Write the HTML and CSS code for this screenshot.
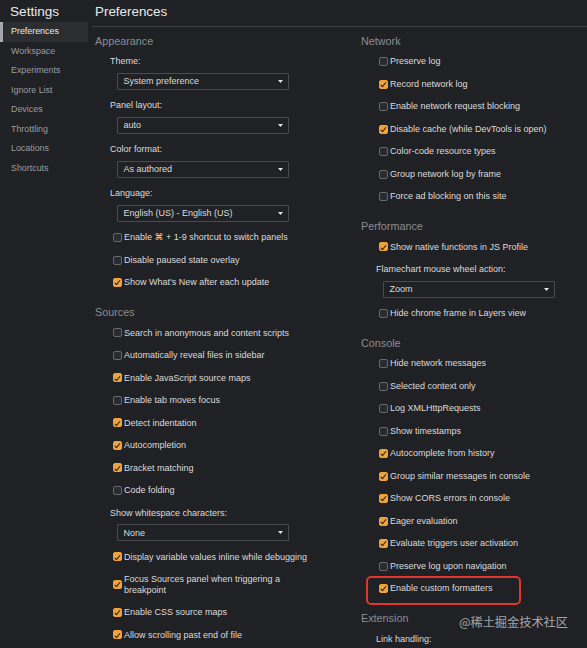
FILE: index.html
```html
<!DOCTYPE html>
<html lang="en">
<head>
<meta charset="utf-8">
<title>Settings</title>
<link rel="stylesheet" href="styles.css">
</head>
<body>
<div class="app">
  <aside class="sidebar">
    <div class="sb-title">Settings</div>
    <nav class="sb-nav">
      <div class="sb-item active">Preferences</div>
      <div class="sb-item">Workspace</div>
      <div class="sb-item">Experiments</div>
      <div class="sb-item">Ignore List</div>
      <div class="sb-item">Devices</div>
      <div class="sb-item">Throttling</div>
      <div class="sb-item">Locations</div>
      <div class="sb-item">Shortcuts</div>
    </nav>
  </aside>
  <main class="main">
    <header class="main-header"><h1 class="main-title">Preferences</h1></header>
    <div class="content">
      <div class="col col-left">
        <section class="sec">
          <h2 class="sec-title">Appearance</h2>
          <div class="label">Theme:</div>
          <div class="select"><span>System preference</span><svg class="arrow" width="5" height="3" viewBox="0 0 5 3"><path d="M0 0h5L2.5 3z"/></svg></div>
          <div class="label">Panel layout:</div>
          <div class="select"><span>auto</span><svg class="arrow" width="5" height="3" viewBox="0 0 5 3"><path d="M0 0h5L2.5 3z"/></svg></div>
          <div class="label">Color format:</div>
          <div class="select"><span>As authored</span><svg class="arrow" width="5" height="3" viewBox="0 0 5 3"><path d="M0 0h5L2.5 3z"/></svg></div>
          <div class="label">Language:</div>
          <div class="select"><span>English (US) - English (US)</span><svg class="arrow" width="5" height="3" viewBox="0 0 5 3"><path d="M0 0h5L2.5 3z"/></svg></div>
          <div class="row"><span class="cb"></span><span class="txt">Enable ⌘ + 1-9 shortcut to switch panels</span></div>
          <div class="row"><span class="cb"></span><span class="txt">Disable paused state overlay</span></div>
          <div class="row"><span class="cb on"></span><span class="txt">Show What's New after each update</span></div>
        </section>
        <section class="sec">
          <h2 class="sec-title">Sources</h2>
          <div class="row"><span class="cb"></span><span class="txt">Search in anonymous and content scripts</span></div>
          <div class="row"><span class="cb"></span><span class="txt">Automatically reveal files in sidebar</span></div>
          <div class="row"><span class="cb on"></span><span class="txt">Enable JavaScript source maps</span></div>
          <div class="row"><span class="cb"></span><span class="txt">Enable tab moves focus</span></div>
          <div class="row"><span class="cb on"></span><span class="txt">Detect indentation</span></div>
          <div class="row"><span class="cb on"></span><span class="txt">Autocompletion</span></div>
          <div class="row"><span class="cb on"></span><span class="txt">Bracket matching</span></div>
          <div class="row"><span class="cb"></span><span class="txt">Code folding</span></div>
          <div class="label">Show whitespace characters:</div>
          <div class="select"><span>None</span><svg class="arrow" width="5" height="3" viewBox="0 0 5 3"><path d="M0 0h5L2.5 3z"/></svg></div>
          <div class="row"><span class="cb on"></span><span class="txt">Display variable values inline while debugging</span></div>
          <div class="row wrap"><span class="cb on"></span><span class="txt">Focus Sources panel when triggering a breakpoint</span></div>
          <div class="row"><span class="cb on"></span><span class="txt">Enable CSS source maps</span></div>
          <div class="row"><span class="cb on"></span><span class="txt">Allow scrolling past end of file</span></div>
        </section>
      </div>
      <div class="col col-right">
        <section class="sec">
          <h2 class="sec-title">Network</h2>
          <div class="row"><span class="cb"></span><span class="txt">Preserve log</span></div>
          <div class="row"><span class="cb on"></span><span class="txt">Record network log</span></div>
          <div class="row"><span class="cb"></span><span class="txt">Enable network request blocking</span></div>
          <div class="row"><span class="cb on"></span><span class="txt">Disable cache (while DevTools is open)</span></div>
          <div class="row"><span class="cb"></span><span class="txt">Color-code resource types</span></div>
          <div class="row"><span class="cb"></span><span class="txt">Group network log by frame</span></div>
          <div class="row"><span class="cb"></span><span class="txt">Force ad blocking on this site</span></div>
        </section>
        <section class="sec">
          <h2 class="sec-title">Performance</h2>
          <div class="row"><span class="cb on"></span><span class="txt">Show native functions in JS Profile</span></div>
          <div class="label">Flamechart mouse wheel action:</div>
          <div class="select"><span>Zoom</span><svg class="arrow" width="5" height="3" viewBox="0 0 5 3"><path d="M0 0h5L2.5 3z"/></svg></div>
          <div class="row"><span class="cb"></span><span class="txt">Hide chrome frame in Layers view</span></div>
        </section>
        <section class="sec">
          <h2 class="sec-title">Console</h2>
          <div class="row"><span class="cb"></span><span class="txt">Hide network messages</span></div>
          <div class="row"><span class="cb"></span><span class="txt">Selected context only</span></div>
          <div class="row"><span class="cb"></span><span class="txt">Log XMLHttpRequests</span></div>
          <div class="row"><span class="cb"></span><span class="txt">Show timestamps</span></div>
          <div class="row"><span class="cb on"></span><span class="txt">Autocomplete from history</span></div>
          <div class="row"><span class="cb on"></span><span class="txt">Group similar messages in console</span></div>
          <div class="row"><span class="cb on"></span><span class="txt">Show CORS errors in console</span></div>
          <div class="row"><span class="cb on"></span><span class="txt">Eager evaluation</span></div>
          <div class="row"><span class="cb on"></span><span class="txt">Evaluate triggers user activation</span></div>
          <div class="row"><span class="cb"></span><span class="txt">Preserve log upon navigation</span></div>
          <div class="row marked"><span class="cb on"></span><span class="txt">Enable custom formatters</span></div>
        </section>
        <section class="sec">
          <h2 class="sec-title">Extension</h2>
          <div class="label">Link handling:</div>
        </section>
      </div>
    </div>
  </main>
</div>
<div class="watermark">@稀土掘金技术社区</div>
</body>
</html>
```

FILE: styles.css
```css
* { box-sizing: border-box; margin: 0; padding: 0; }
html, body { width: 587px; height: 648px; }
body {
  background: #202124;
  color: #dcdcdc;
  font-family: "Liberation Sans", Arial, "DejaVu Sans", sans-serif;
  font-size: 9px;
  overflow: hidden;
  position: relative;
}
.app { display: flex; height: 100%; }

.sidebar { width: 92px; flex: none; }
.sb-title {
  height: 22px;
  padding: 1px 0 0 10px;
  font-size: 13.6px;
  line-height: 21px;
  color: #e8eaed;
}
.sb-item {
  height: 19.5px;
  line-height: 19.5px;
  padding-left: 11px;
  margin-right: 4px;
  color: #9a9da1;
  font-size: 8.9px;
}
.sb-item.active {
  background: #2c2d30;
  color: #e8eaed;
  box-shadow: inset 3px 0 0 #a5a7aa;
}

.main { flex: 1; min-width: 0; }
.main-header {
  height: 27px;
  border-bottom: 1px solid #3f4043;
  padding-left: 3px;
}
.main-title {
  font-size: 13.4px;
  font-weight: normal;
  line-height: 23px;
  color: #e8eaed;
}
.content {
  display: grid;
  grid-template-columns: 266px 1fr;
  padding: 6.7px 0 0 3px;
}
.col-left { padding-right: 47px; }

.sec + .sec { margin-top: 11px; }
.sec-title {
  font-size: 10.8px;
  font-weight: normal;
  height: 14px;
  line-height: 14px;
  color: #8b8e92;
  margin-bottom: 2.75px;
}
.label {
  height: 22.5px;
  line-height: 22.5px;
  padding-left: 15px;
  white-space: nowrap;
}
.select {
  margin-left: 22px;
  width: 172px;
  height: 17px;
  border: 1px solid #4a4b4e;
  border-radius: 1px;
  display: flex;
  align-items: center;
  justify-content: space-between;
  padding: 0 5px 0 5.5px;
  margin-bottom: 4.5px;
}
.arrow { fill: #e3e3e3; flex: none; }

.row {
  display: flex;
  align-items: center;
  min-height: 22.5px;
  padding: 6px 0 6px 18px;
  line-height: 10.5px;
}
.cb {
  flex: none;
  width: 9px;
  height: 9px;
  border: 1px solid #66686c;
  border-radius: 2px;
  background: #2a2b2e;
  margin-right: 2px;
  position: relative;
}
.cb.on { background: #eea33e; border-color: #eea33e; }
.cb.on::after {
  content: "";
  position: absolute;
  left: 2.3px;
  top: 0.3px;
  width: 2.2px;
  height: 4.6px;
  border: solid #2a1c06;
  border-width: 0 1.4px 1.4px 0;
  transform: rotate(40deg);
}
.row.marked { position: relative; }
.row.marked::before {
  content: "";
  position: absolute;
  left: 5px;
  top: -1px;
  width: 151px;
  height: 25px;
  border: 2px solid #e1342f;
  border-radius: 5px;
}

.watermark {
  position: absolute;
  right: 19px;
  top: 614px;
  font-family: "Noto Sans CJK SC", sans-serif;
  font-size: 12.2px;
  line-height: 16px;
  color: rgba(225, 225, 225, 0.7);
}
```
